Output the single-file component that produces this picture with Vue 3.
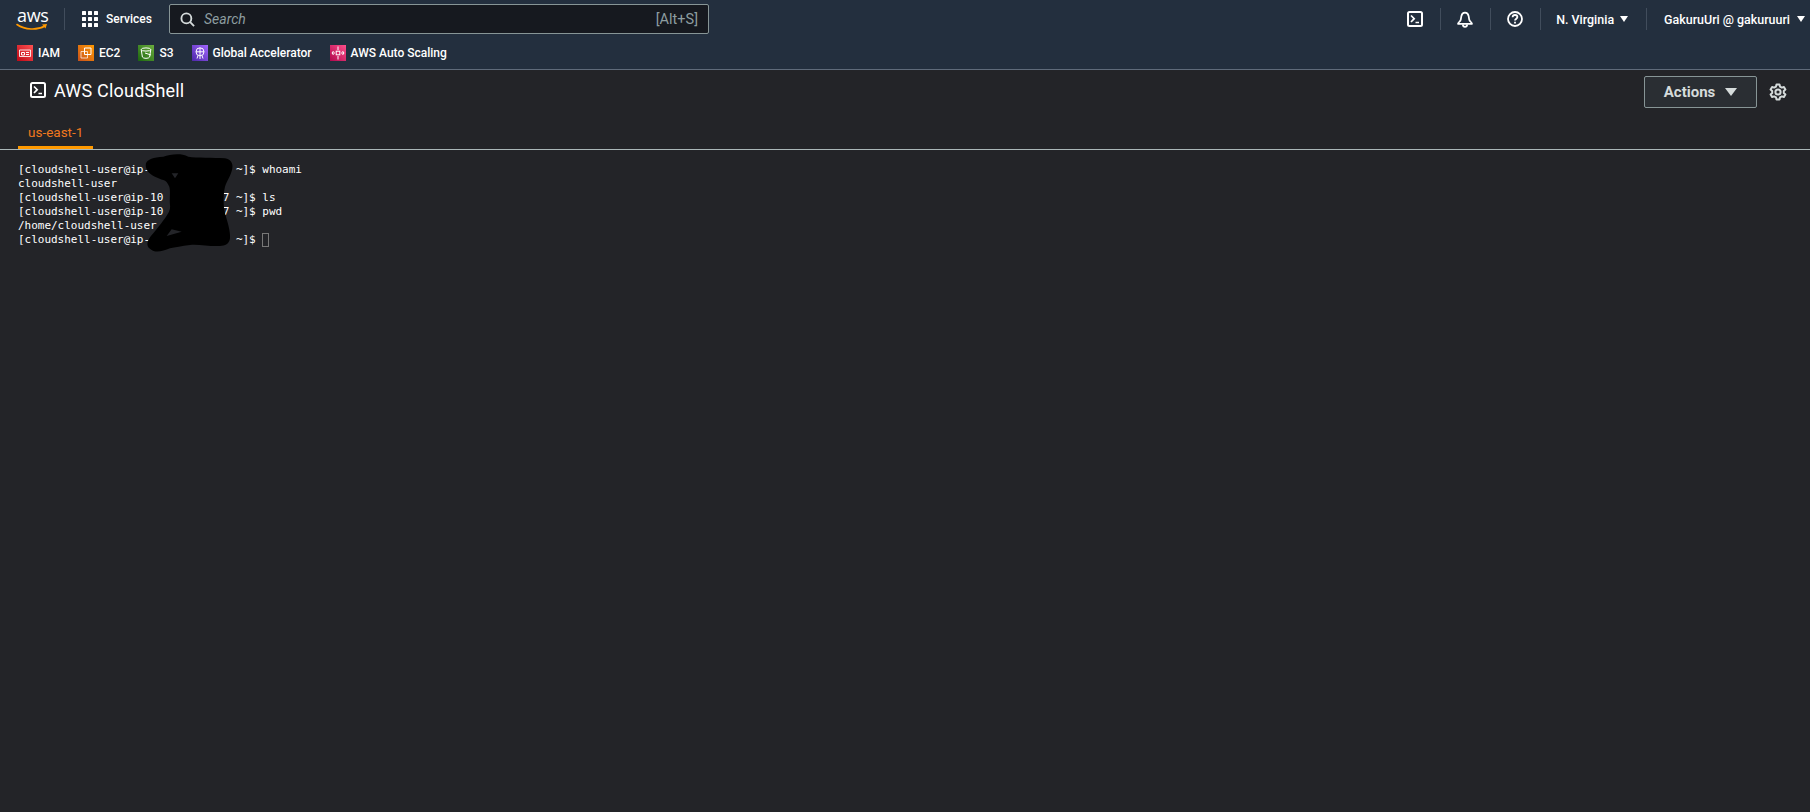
<script setup>
const favourites = [
  { id: 'iam', label: 'IAM' },
  { id: 'ec2', label: 'EC2' },
  { id: 's3', label: 'S3' },
  { id: 'ga', label: 'Global Accelerator' },
  { id: 'scale', label: 'AWS Auto Scaling' }
]
const lines = [
  '[cloudshell-user@ip-             ~]$ whoami',
  'cloudshell-user',
  '[cloudshell-user@ip-10         7 ~]$ ls',
  '[cloudshell-user@ip-10         7 ~]$ pwd',
  '/home/cloudshell-user',
  '[cloudshell-user@ip-             ~]$ '
]
</script>

<template>
  <div class="page">
    <header class="header">
      <div class="top-row">
        <div class="logo">
          <span class="logo-text">aws</span>
          <svg class="logo-smile" width="32" height="8" viewBox="0 0 32 8">
            <path d="M1 1.5C9 7 21 7.5 29 3" fill="none" stroke="#ff9900" stroke-width="1.6" stroke-linecap="round" />
            <path d="M26 1.5L31 1L29.5 5.5Z" fill="#ff9900" />
          </svg>
        </div>
        <span class="divider logo-divider"></span>
        <div class="services">
          <div class="grid-icon"><i v-for="n in 9" :key="n"></i></div>
          <span>Services</span>
        </div>
        <div class="search">
          <svg width="15" height="15" viewBox="0 0 16 16" fill="none" stroke="#d5dbdb" stroke-width="2">
            <circle cx="6.8" cy="6.8" r="5.3" />
            <path d="M10.6 10.6L15 15" />
          </svg>
          <span class="search-text">Search</span>
          <span class="search-key">[Alt+S]</span>
        </div>
        <div class="utilities">
          <svg class="util-icon" width="16" height="16" viewBox="0 0 16 16" fill="none" stroke="#fff" stroke-width="2">
            <rect x="1" y="1" width="14" height="14" rx="1.5" />
            <path d="M4 4.5L7.2 7.7L4 11" stroke-width="1.7" />
            <path d="M8.5 11.5H12" stroke-width="1.5" />
          </svg>
          <span class="divider"></span>
          <svg class="util-icon" width="16" height="17" viewBox="0 0 16 17" fill="none" stroke="#fff" stroke-width="1.7">
            <path d="M1 12.8H15C15 11.4 12.6 10.6 12.2 8.5L11.6 5C11.2 3 9.8 1.6 8 1.6C6.2 1.6 4.8 3 4.4 5L3.8 8.5C3.4 10.6 1 11.4 1 12.8Z" stroke-linejoin="round" />
            <path d="M5.8 13.4C5.9 15 6.8 15.9 8 15.9C9.2 15.9 10.1 15 10.2 13.4" />
          </svg>
          <span class="divider"></span>
          <svg class="util-icon" width="16" height="16" viewBox="0 0 16 16" fill="none" stroke="#fff" stroke-width="1.8">
            <circle cx="8" cy="8" r="7" />
            <path d="M5.6 6.2C5.7 4.8 6.7 4 8 4C9.4 4 10.4 4.9 10.4 6.1C10.4 7.6 8 7.8 8 9.6" />
            <path d="M8 10.8V12.4" />
          </svg>
          <span class="divider"></span>
          <div class="menu region"><span>N. Virginia</span><i class="caret"></i></div>
          <span class="divider"></span>
          <div class="menu user"><span>GakuruUri @ gakuruuri</span><i class="caret"></i></div>
        </div>
      </div>
      <nav class="favourites">
        <div v-for="f in favourites" :key="f.id" class="favourite">
          <span class="fav-icon" :class="'fav-' + f.id">
            <svg width="16" height="16" viewBox="0 0 16 16" fill="none" stroke="#fff" stroke-width="1">
              <template v-if="f.id === 'iam'">
                <path d="M2.5 5H13.5V11.5H2.5Z" stroke-opacity=".85" />
                <path d="M4.5 7.5H7.5V10H4.5Z" />
                <path d="M9 7.5H12M9 9.5H12" />
              </template>
              <template v-else-if="f.id === 'ec2'">
                <path d="M6.5 3H13V9.5H6.5Z" />
                <path d="M3 6.5H9.5V13H3Z" stroke-opacity=".7" />
              </template>
              <template v-else-if="f.id === 's3'">
                <ellipse cx="8" cy="4.5" rx="4.8" ry="1.6" />
                <path d="M3.2 4.5L4.4 12C5 13.8 11 13.8 11.6 12L12.8 4.5" />
                <path d="M7 8L13 10" />
              </template>
              <template v-else-if="f.id === 'ga'">
                <circle cx="8" cy="6.8" r="4" />
                <path d="M8 2.8V10.8M4 6.8H12M6 10.5L5 13.5M10 10.5L11 13.5M8 11V14" />
              </template>
              <template v-else>
                <rect x="6.2" y="6.2" width="3.6" height="3.6" />
                <path d="M8 1.5V5M8 11V14.5M2 8H5M11 8H14M3.5 6L2 8L3.5 10M12.5 6L14 8L12.5 10" />
              </template>
            </svg>
          </span>
          <span>{{ f.label }}</span>
        </div>
      </nav>
    </header>

    <main class="shell">
      <div class="title-row">
        <div class="title">
          <svg width="16" height="16" viewBox="0 0 16 16" fill="none" stroke="#fff" stroke-width="2">
            <rect x="1" y="1" width="14" height="14" rx="1.5" />
            <path d="M4 4.5L7.2 7.7L4 11" stroke-width="1.7" />
            <path d="M8.5 11.5H12" stroke-width="1.5" />
          </svg>
          <h1>AWS CloudShell</h1>
        </div>
        <button class="actions">Actions<i class="actions-caret"></i></button>
        <svg class="gear" width="18" height="18" viewBox="0 0 18 18" fill="none" stroke="#d5dbdb" stroke-width="2">
          <circle cx="9" cy="9" r="2.6" />
          <path d="M7.5 1.5H10.5L11 3.6L12.8 4.6L14.9 4L16.4 6.6L14.8 8.1V9.9L16.4 11.4L14.9 14L12.8 13.4L11 14.4L10.5 16.5H7.5L7 14.4L5.2 13.4L3.1 14L1.6 11.4L3.2 9.9V8.1L1.6 6.6L3.1 4L5.2 4.6L7 3.6Z" stroke-linejoin="round" />
        </svg>
      </div>
      <div class="tabs">
        <div class="tab">us-east-1</div>
      </div>
      <div class="terminal">
        <div v-for="(line, i) in lines" :key="i" class="term-line">{{ line }}<i v-if="i === lines.length - 1" class="cursor"></i></div>
        <svg class="redaction" width="120" height="105" viewBox="0 0 360 315">
          <path fill="#000" fill-rule="evenodd" d="M48 40C52 28 70 22 100 20C120 14 150 8 175 20C200 24 250 22 285 25C302 28 310 40 307 55C304 75 290 95 285 110C280 130 279 165 285 190C292 215 302 245 300 265C298 282 285 288 270 288C240 290 205 282 180 285C155 288 135 292 120 295C100 302 80 310 65 300C50 292 48 280 60 262C72 248 90 225 105 205C115 190 122 180 120 165C118 145 122 125 118 110C112 98 108 92 100 90C85 85 60 75 52 62C48 55 46 48 48 40ZM125 70L145 70L135 85ZM110 258L125 238L155 245Z" />
        </svg>
      </div>
    </main>
  </div>
</template>

<style scoped>
.page {
  width: 1810px;
  height: 812px;
  display: flex;
  flex-direction: column;
  overflow: hidden;
  background: #232428;
  color: #fff;
  font-family: Roboto, "Open Sans", sans-serif;
}
.header {
  height: 70px;
  box-sizing: border-box;
  flex: none;
  background: #232f3e;
  border-bottom: 1px solid #5f6b7a;
}
.top-row {
  height: 38px;
  display: flex;
  align-items: center;
  padding-left: 16px;
}
.logo {
  width: 32px;
  height: 24px;
  position: relative;
}
.logo-text {
  display: block;
  padding-left: 1px;
  font-family: "Open Sans", sans-serif;
  font-size: 18px;
  line-height: 17px;
  letter-spacing: -0.3px;
  color: #fff;
}
.logo-smile {
  display: block;
  margin-top: -1px;
}
.divider {
  width: 1px;
  height: 22px;
  background: #414d5c;
  flex: none;
}
.logo-divider {
  margin-left: 16px;
}
.services {
  display: flex;
  align-items: center;
  gap: 8px;
  margin-left: 17px;
  font-size: 12px;
  font-weight: 500;
  width: 87px;
}
.grid-icon {
  display: grid;
  grid-template-columns: repeat(3, 4px);
  grid-template-rows: repeat(3, 4px);
  gap: 2px;
}
.grid-icon i {
  background: #fff;
  border-radius: 0.5px;
}
.search {
  width: 540px;
  height: 30px;
  box-sizing: border-box;
  display: flex;
  align-items: center;
  padding: 0 10px 0 10px;
  background: #16191f;
  border: 1px solid #879596;
  border-radius: 2px;
}
.search-text {
  margin-left: 9px;
  font-size: 14px;
  font-style: italic;
  color: #8d9da0;
}
.search-key {
  margin-left: auto;
  font-size: 14.5px;
  color: #8d9da0;
}
.utilities {
  margin-left: auto;
  display: flex;
  align-items: center;
  font-size: 12.45px;
  font-weight: 500;
}
.util-icon {
  width: 16px;
  margin: 0 17px 0 16px;
}
.menu {
  display: flex;
  align-items: center;
}
.region {
  padding: 0 18px 0 15px;
}
.region .caret {
  margin-left: 6px;
}
.user {
  padding: 0 5px 0 17px;
}
.caret {
  margin-left: 7px;
  width: 0;
  height: 0;
  border-left: 4px solid transparent;
  border-right: 4px solid transparent;
  border-top: 6px solid #fff;
}
.favourites {
  height: 31px;
  display: flex;
  align-items: flex-start;
  padding: 7px 0 0 17px;
  gap: 18px;
}
.favourite {
  display: flex;
  align-items: center;
  gap: 5px;
  font-size: 12px;
  font-weight: 500;
  line-height: 16px;
}
.fav-icon {
  width: 16px;
  height: 16px;
  display: block;
}
.fav-icon svg {
  display: block;
}
.fav-iam { background: linear-gradient(45deg, #bd0816, #ff5252); }
.fav-ec2 { background: linear-gradient(45deg, #c8511b, #ff9900); }
.fav-s3 { background: linear-gradient(45deg, #1b660f, #6cae3e); }
.fav-ga { background: linear-gradient(45deg, #4d27a8, #a166ff); }
.fav-scale { background: linear-gradient(45deg, #b0084d, #ff4f8b); }
.shell {
  flex: 1;
  min-height: 0;
  display: flex;
  flex-direction: column;
}
.title-row {
  height: 44px;
  flex: none;
  display: flex;
  align-items: center;
  padding: 0 23px 0 30px;
}
.title {
  display: flex;
  align-items: center;
  gap: 8px;
  margin-right: auto;
  margin-top: -4px;
}
.title h1 {
  margin: 0;
  font-size: 18px;
  font-weight: 400;
  letter-spacing: 0.2px;
  color: #fff;
}
.actions {
  width: 113px;
  height: 32px;
  display: flex;
  align-items: center;
  justify-content: center;
  gap: 10px;
  padding: 0;
  background: #2a2e33;
  border: 1px solid #879596;
  border-radius: 2px;
  color: #d5dbdb;
  font-family: inherit;
  font-size: 15px;
  font-weight: 700;
}
.actions-caret {
  width: 0;
  height: 0;
  border-left: 6px solid transparent;
  border-right: 6px solid transparent;
  border-top: 8px solid #d5dbdb;
}
.gear {
  margin-left: 12px;
}
.tabs {
  height: 36px;
  box-sizing: border-box;
  flex: none;
  display: flex;
  padding-left: 18px;
  border-bottom: 1px solid #aab7b8;
}
.tab {
  width: 75px;
  height: 35px;
  box-sizing: border-box;
  padding-left: 10px;
  border-bottom: 3px solid #ff9900;
  color: #f0781e;
  font-size: 13.5px;
  line-height: 36px;
}
.terminal {
  position: relative;
  flex: 1;
  padding: 13px 0 0 18px;
  font-family: "DejaVu Sans Mono", monospace;
  font-size: 11px;
  line-height: 14px;
  letter-spacing: -0.02px;
  color: #fff;
}
.term-line {
  height: 14px;
  white-space: pre;
}
.cursor {
  display: inline-block;
  width: 7px;
  height: 14px;
  box-sizing: border-box;
  border: 1px solid #787878;
  vertical-align: top;
}
.redaction {
  position: absolute;
  left: 130px;
  top: 0;
}
</style>
